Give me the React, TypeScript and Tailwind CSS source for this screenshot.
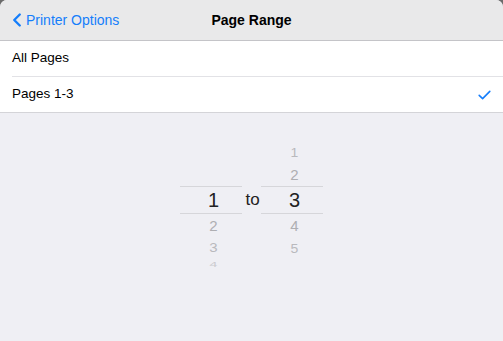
import { ChevronLeft } from 'lucide-react'

const font = { fontFamily: '"Liberation Sans", Arial, sans-serif' }

function PickerItem({ value, className = '' }: { value: string; className?: string }) {
  return <div className={`flex items-center justify-center pl-[5px] ${className}`}>{value}</div>
}

export default function App() {
  return (
    <div className="h-[341px] w-[503px] bg-[#6b6b6b]" style={font}>
      <div className="flex h-full w-full flex-col overflow-hidden rounded-t-[7px] bg-[#efeff4]">
        <header className="relative flex h-[41px] shrink-0 items-center justify-center border-b border-[#c4c4c8] bg-[#e9e9ea]">
          <div className="absolute left-[6px] top-0 flex h-full items-center text-[14px] text-[#157efb]">
            <ChevronLeft className="h-[22px] w-[22px] -mr-[2px]" strokeWidth={2.6} />
            <span>Printer Options</span>
          </div>
          <h1 className="text-[14px] font-bold text-black">Page Range</h1>
        </header>

        <div className="shrink-0 border-b border-[#d4d4d8] bg-white">
          <div className="flex h-[36px] items-center pl-[12px] text-[13.5px] text-black">
            <div className="flex h-full flex-1 items-center border-b border-[#e2e2e6]">All Pages</div>
          </div>
          <div className="flex h-[35px] items-center justify-between pl-[12px] pr-[12px] text-[13.5px] text-black">
            <span>Pages 1-3</span>
            <svg width="13" height="10" viewBox="0 0 13 10" fill="none">
              <path d="M1.2 5.4 4.6 8.6 11.8 1.4" stroke="#157efb" strokeWidth="1.6" strokeLinecap="round" strokeLinejoin="round" />
            </svg>
          </div>
        </div>

        <div className="flex flex-1 justify-center pt-[29px]">
          <div className="flex items-start">
            <div className="flex w-[62px] flex-col">
              <div className="h-[44px]" />
              <PickerItem value="1" className="h-[28px] border-y border-[#d6d6da] text-[20px] text-[#222]" />
              <PickerItem value="2" className="h-[25px] text-[15px] text-[#aeaeb2]" />
              <PickerItem value="3" className="h-[20px] origin-top scale-y-[0.85] text-[15px] text-[#b9b9bd]" />
              <PickerItem value="4" className="h-[10px] scale-y-[0.5] text-[14px] leading-none text-[#cbcbcf]" />
            </div>
            <div className="flex w-[19px] flex-col">
              <div className="h-[44px]" />
              <span className="flex h-[28px] items-center justify-center pl-[2px] text-[17px] text-[#222]">to</span>
            </div>
            <div className="flex w-[62px] flex-col">
              <PickerItem value="1" className="h-[22px] scale-y-[0.85] text-[14px] text-[#b9b9bd]" />
              <PickerItem value="2" className="h-[22px] text-[15px] text-[#aeaeb2]" />
              <PickerItem value="3" className="h-[28px] border-y border-[#d6d6da] text-[20px] text-[#222]" />
              <PickerItem value="4" className="h-[25px] text-[15px] text-[#aeaeb2]" />
              <PickerItem value="5" className="h-[20px] scale-y-[0.85] text-[14px] text-[#b9b9bd]" />
            </div>
          </div>
        </div>
      </div>
    </div>
  )
}
